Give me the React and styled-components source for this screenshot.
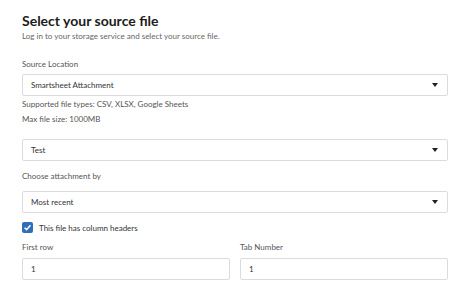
import React from "react";
import styled, { createGlobalStyle } from "styled-components";

const Global = createGlobalStyle`
  html, body { margin: 0; padding: 0; background: #fff; }
  body { font-family: "Lato", "Inter", sans-serif; color: #333; }
`;

const Page = styled.div`
  width: 426px;
  padding: 11px 0 0 22px;
  display: flex;
  flex-direction: column;
`;

const Title = styled.h1`
  margin: 0;
  font-size: 14px;
  line-height: 20px;
  font-weight: 700;
  color: #1c1c1c;
`;

const Sub = styled.p`
  margin: 0;
  font-size: 8px;
  line-height: 11px;
  color: #666;
`;

const Label = styled.div`
  margin-top: ${(p) => p.$mt}px;
  font-size: 8px;
  line-height: 12px;
  color: #555;
`;

const Box = styled.div`
  margin-top: ${(p) => p.$mt}px;
  height: 22px;
  box-sizing: border-box;
  border: 1px solid #dcdcdc;
  border-radius: 2px;
  background: #fff;
  display: flex;
  align-items: center;
  justify-content: space-between;
  padding: 0 9px 0 8px;
  font-size: 8px;
  color: #333;
`;

const Caret = styled.span`
  width: 0;
  height: 0;
  border-left: 3px solid transparent;
  border-right: 3px solid transparent;
  border-top: 4px solid #222;
`;

const CheckRow = styled.label`
  margin-top: 9px;
  height: 11px;
  display: flex;
  align-items: center;
  gap: 6px;
  font-size: 8px;
  color: #333;
`;

const Check = styled.span`
  width: 11px;
  height: 11px;
  border-radius: 2px;
  background: #2f6fb8;
  display: flex;
  align-items: center;
  justify-content: center;
`;

const Row = styled.div`
  display: grid;
  grid-template-columns: 1fr 1fr;
  column-gap: 10px;
`;

const Col = styled.div`
  display: flex;
  flex-direction: column;
`;

const Select = ({ mt, children }) => (
  <Box $mt={mt}>
    <span>{children}</span>
    <Caret />
  </Box>
);

export default function App() {
  return (
    <>
      <Global />
      <Page>
        <Title>Select your source file</Title>
        <Sub>Log in to your storage service and select your source file.</Sub>
        <Label $mt={16}>Source Location</Label>
        <Select mt={4}>Smartsheet Attachment</Select>
        <Label $mt={2}>Supported file types: CSV, XLSX, Google Sheets</Label>
        <Label $mt={3}>Max file size: 1000MB</Label>
        <Select mt={14}>Test</Select>
        <Label $mt={9}>Choose attachment by</Label>
        <Select mt={9}>Most recent</Select>
        <CheckRow>
          <Check>
            <svg width="9" height="9" viewBox="0 0 10 10">
              <path d="M1.8 5.2 L4 7.4 L8.3 2.4" fill="none" stroke="#fff" strokeWidth="1.7" />
            </svg>
          </Check>
          This file has column headers
        </CheckRow>
        <Row>
          <Col>
            <Label $mt={8}>First row</Label>
            <Box $mt={5}>1</Box>
          </Col>
          <Col>
            <Label $mt={8}>Tab Number</Label>
            <Box $mt={5}>1</Box>
          </Col>
        </Row>
      </Page>
    </>
  );
}
